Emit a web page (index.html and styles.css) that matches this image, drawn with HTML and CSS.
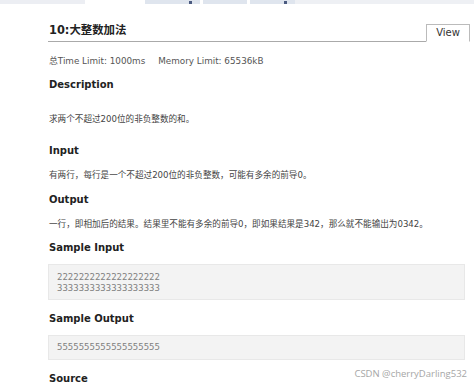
FILE: index.html
```html
<!DOCTYPE html>
<html lang="zh">
<head>
<meta charset="utf-8">
<link rel="stylesheet" href="styles.css">
</head>
<body>
<div class="topnav">
  <span class="seg seg-a"></span>
  <span class="seg seg-gap"></span>
  <span class="seg seg-tab t1"><i></i></span>
  <span class="seg seg-tab t2"></span>
  <span class="seg seg-tab t3"><i></i></span>
  <span class="seg seg-rest"></span>
</div>
<div class="page">
  <div class="titlebar">
    <h1 class="title">10:大整数加法</h1>
    <span class="tab">View</span>
  </div>
  <p class="limits">总Time Limit: 1000ms<span class="sp"></span>Memory Limit: 65536kB</p>
  <h2 class="sec">Description</h2>
  <p class="txt desc">求两个不超过200位的非负整数的和。</p>
  <h2 class="sec sec-in">Input</h2>
  <p class="txt">有两行，每行是一个不超过200位的非负整数，可能有多余的前导0。</p>
  <h2 class="sec sec-out">Output</h2>
  <p class="txt">一行，即相加后的结果。结果里不能有多余的前导0，即如果结果是342，那么就不能输出为0342。</p>
  <h2 class="sec sec-si">Sample Input</h2>
  <pre class="sample sample-in">2222222222222222222
3333333333333333333</pre>
  <h2 class="sec sec-so">Sample Output</h2>
  <pre class="sample sample-out">5555555555555555555</pre>
  <h2 class="sec sec-src">Source</h2>
</div>
<div class="watermark">CSDN @cherryDarling532</div>
</body>
</html>
```

FILE: styles.css
```css
html, body {
  margin: 0;
  padding: 0;
  background: #fff;
  overflow: hidden;
}
body {
  width: 474px;
  height: 384px;
  position: relative;
  font-family: "DejaVu Sans", "Noto Sans CJK SC", sans-serif;
  color: #333;
}
.topnav {
  display: flex;
  height: 4px;
}
.seg { display: block; height: 4px; position: relative; }
.seg-a { width: 85px; background: #eceef3; }
.seg-gap { width: 60px; background: #fff; }
.seg-tab { background: #dfe5ee; margin-right: 3px; }
.t1 { width: 55px; }
.t2 { width: 44px; }
.t3 { width: 45px; margin-right: 0; }
.seg-tab i {
  position: absolute;
  right: 8px;
  bottom: 0;
  width: 3px;
  height: 3px;
  background: #4a5a80;
}
.seg-rest { flex: 1; background: #eef0f4; }

.page {
  padding-left: 48px;
}
.titlebar {
  display: flex;
  align-items: flex-end;
  justify-content: space-between;
  width: 422px;
  border-bottom: 1px solid #aaa;
  margin-top: 21px;
  height: 16px;
}
.title {
  margin: 0 0 4px 1px;
  font-size: 11.4px;
  line-height: 14px;
  font-weight: bold;
  color: #222;
}
.tab {
  box-sizing: border-box;
  width: 44px;
  height: 18px;
  margin-bottom: -1px;
  border: 1px solid #bbb;
  border-bottom: 1px solid #fff;
  background: #fff;
  font-size: 10px;
  line-height: 16px;
  text-align: center;
  color: #333;
}
.limits {
  margin: 13px 0 0 1px;
  font-size: 8.8px;
  line-height: 12px;
  color: #555;
}
.sp { display: inline-block; width: 13px; }
.sec {
  margin: 0 0 0 1px;
  font-size: 10px;
  line-height: 14px;
  font-weight: bold;
  color: #222;
}
.limits + .sec { margin-top: 11px; }
.txt {
  margin: 11px 0 0 1px;
  font-size: 8.6px;
  line-height: 12px;
  color: #444;
}
.desc { margin-top: 21px; }
.sec-in { margin-top: 19px; }
.sec-out { margin-top: 12px; }
.sec-si { margin-top: 11px; }
.sample {
  box-sizing: border-box;
  width: 417px;
  margin: 9px 0 0 0;
  padding: 6px 8px;
  background: #f3f3f3;
  border: 1px solid #e8e8e8;
  font-family: "DejaVu Sans Mono", monospace;
  font-size: 9px;
  line-height: 11px;
  color: #808080;
}
.sample-in { height: 36px; padding-top: 7px; }
.sec-so { margin-top: 12px; }
.sample-out { height: 25px; margin-top: 9px; }
.sec-src { margin-top: 12px; }
.watermark {
  position: absolute;
  right: 7px;
  top: 367px;
  font-family: "Open Sans", "DejaVu Sans", sans-serif;
  font-size: 9.5px;
  line-height: 14px;
  color: #a6a6a6;
}
```
